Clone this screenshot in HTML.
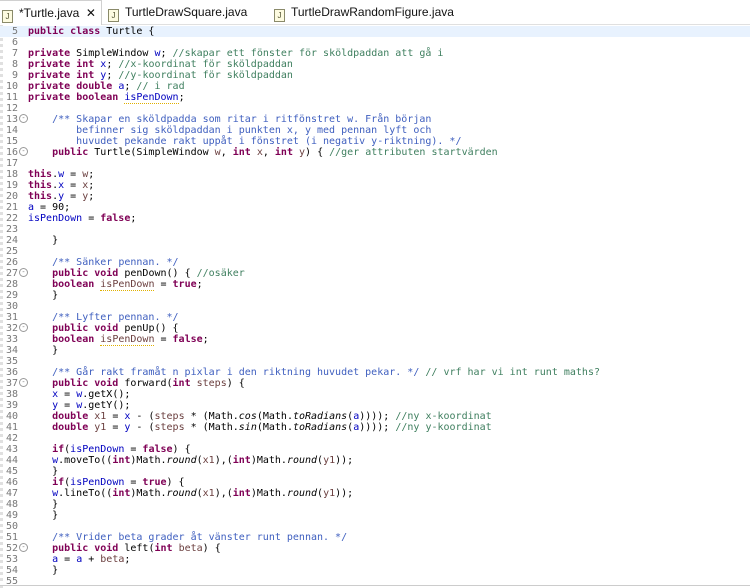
<!DOCTYPE html><html><head><meta charset="utf-8"><style>
body{margin:0;width:750px;height:588px;overflow:hidden;background:#fff;font-family:"DejaVu Sans Mono",monospace;}
.tabs{position:absolute;left:0;top:0;width:750px;height:24px;background:#fff;border-bottom:1px solid #e0e0e0;font-family:"Liberation Sans",sans-serif;font-size:12px;color:#111;}
.tab{position:absolute;top:0;height:24px;line-height:24px;}
.tab.act{left:-1px;width:101px;background:#fff;border:1px solid #d0d0d0;border-bottom:none;}
.ic{display:inline-block;width:9px;height:11px;border:1px solid #8a8a6a;background:#fdfbe0;vertical-align:-2px;margin-right:6px;font-size:8px;line-height:11px;text-align:center;color:#553;}
.gut{position:absolute;left:0;top:25px;width:24px;height:563px;background:#fff;border-left:3px dotted #e0e0e0;box-sizing:border-box;}
.cur{position:absolute;left:0;top:26px;width:750px;height:11px;background:#e8f2fe;}
pre{margin:0;position:absolute;top:26px;font-size:10px;line-height:11px;font-family:"DejaVu Sans Mono",monospace;}
#ln{left:0;width:18px;text-align:right;color:#787878;}
#code{left:28px;color:#000;}
.k{color:#7f0055;font-weight:bold}.c{color:#3f7f5f}.d{color:#3f5fbf}.f{color:#0000c0}.l{color:#6a3e3e}i{font-style:italic}
.w{border-bottom:1px dotted #e0b000}
.fold{position:absolute;left:19px;width:7px;height:7px;border:1px solid #999;border-radius:50%;font-size:7px;line-height:7px;text-align:center;color:#777;box-sizing:content-box}
.bot{position:absolute;left:0;top:585px;width:750px;height:1px;background:#ccc}
</style></head><body>
<div class="tabs">
<div class="tab act"><span class="ic" style="margin-left:2px">J</span>*Turtle.java&nbsp;&nbsp;✕</div>
<div class="tab" style="left:108px"><span class="ic">J</span>TurtleDrawSquare.java</div>
<div class="tab" style="left:274px"><span class="ic">J</span>TurtleDrawRandomFigure.java</div>
</div>
<div class="gut"></div>
<div class="cur"></div>
<pre id="ln">5
6
7
8
9
10
11
12
13
14
15
16
17
18
19
20
21
22
23
24
25
26
27
28
29
30
31
32
33
34
35
36
37
38
39
40
41
42
43
44
45
46
47
48
49
50
51
52
53
54
55</pre>
<div class="fold" style="top:114px">-</div>
<div class="fold" style="top:147px">-</div>
<div class="fold" style="top:268px">-</div>
<div class="fold" style="top:323px">-</div>
<div class="fold" style="top:378px">-</div>
<div class="fold" style="top:543px">-</div>
<pre id="code"><span class="k">public</span> <span class="k">class</span> Turtle {

<span class="k">private</span> SimpleWindow <span class="f">w</span>; <span class="c">//skapar ett fönster för sköldpaddan att gå i</span>
<span class="k">private</span> <span class="k">int</span> <span class="f">x</span>; <span class="c">//x-koordinat för sköldpaddan</span>
<span class="k">private</span> <span class="k">int</span> <span class="f">y</span>; <span class="c">//y-koordinat för sköldpaddan</span>
<span class="k">private</span> <span class="k">double</span> <span class="f">a</span>; <span class="c">// i rad</span>
<span class="k">private</span> <span class="k">boolean</span> <span class="f w">isPenDown</span>;

    <span class="d">/** Skapar en sköldpadda som ritar i ritfönstret w. Från början
        befinner sig sköldpaddan i punkten x, y med pennan lyft och
        huvudet pekande rakt uppåt i fönstret (i negativ y-riktning). */</span>
    <span class="k">public</span> Turtle(SimpleWindow <span class="l">w</span>, <span class="k">int</span> <span class="l">x</span>, <span class="k">int</span> <span class="l">y</span>) { <span class="c">//ger attributen startvärden</span>

<span class="k">this</span>.<span class="f">w</span> = <span class="l">w</span>;
<span class="k">this</span>.<span class="f">x</span> = <span class="l">x</span>;
<span class="k">this</span>.<span class="f">y</span> = <span class="l">y</span>;
<span class="f">a</span> = 90;
<span class="f">isPenDown</span> = <span class="k">false</span>;

    }

    <span class="d">/** Sänker pennan. */</span>
    <span class="k">public</span> <span class="k">void</span> penDown() { <span class="c">//osäker</span>
    <span class="k">boolean</span> <span class="l w">isPenDown</span> = <span class="k">true</span>;
    }

    <span class="d">/** Lyfter pennan. */</span>
    <span class="k">public</span> <span class="k">void</span> penUp() {
    <span class="k">boolean</span> <span class="l w">isPenDown</span> = <span class="k">false</span>;
    }

    <span class="d">/** Går rakt framåt n pixlar i den riktning huvudet pekar. */</span> <span class="c">// vrf har vi int runt maths?</span>
    <span class="k">public</span> <span class="k">void</span> forward(<span class="k">int</span> <span class="l">steps</span>) {
    <span class="f">x</span> = <span class="f">w</span>.getX();
    <span class="f">y</span> = <span class="f">w</span>.getY();
    <span class="k">double</span> <span class="l">x1</span> = <span class="f">x</span> - (<span class="l">steps</span> * (Math.<i>cos</i>(Math.<i>toRadians</i>(<span class="f">a</span>)))); <span class="c">//ny x-koordinat</span>
    <span class="k">double</span> <span class="l">y1</span> = <span class="f">y</span> - (<span class="l">steps</span> * (Math.<i>sin</i>(Math.<i>toRadians</i>(<span class="f">a</span>)))); <span class="c">//ny y-koordinat</span>

    <span class="k">if</span>(<span class="f">isPenDown</span> = <span class="k">false</span>) {
    <span class="f">w</span>.moveTo((<span class="k">int</span>)Math.<i>round</i>(<span class="l">x1</span>),(<span class="k">int</span>)Math.<i>round</i>(<span class="l">y1</span>));
    }
    <span class="k">if</span>(<span class="f">isPenDown</span> = <span class="k">true</span>) {
    <span class="f">w</span>.lineTo((<span class="k">int</span>)Math.<i>round</i>(<span class="l">x1</span>),(<span class="k">int</span>)Math.<i>round</i>(<span class="l">y1</span>));
    }
    }

    <span class="d">/** Vrider beta grader åt vänster runt pennan. */</span>
    <span class="k">public</span> <span class="k">void</span> left(<span class="k">int</span> <span class="l">beta</span>) {
    <span class="f">a</span> = <span class="f">a</span> + <span class="l">beta</span>;
    }
</pre>
<div class="bot"></div>
</body></html>
